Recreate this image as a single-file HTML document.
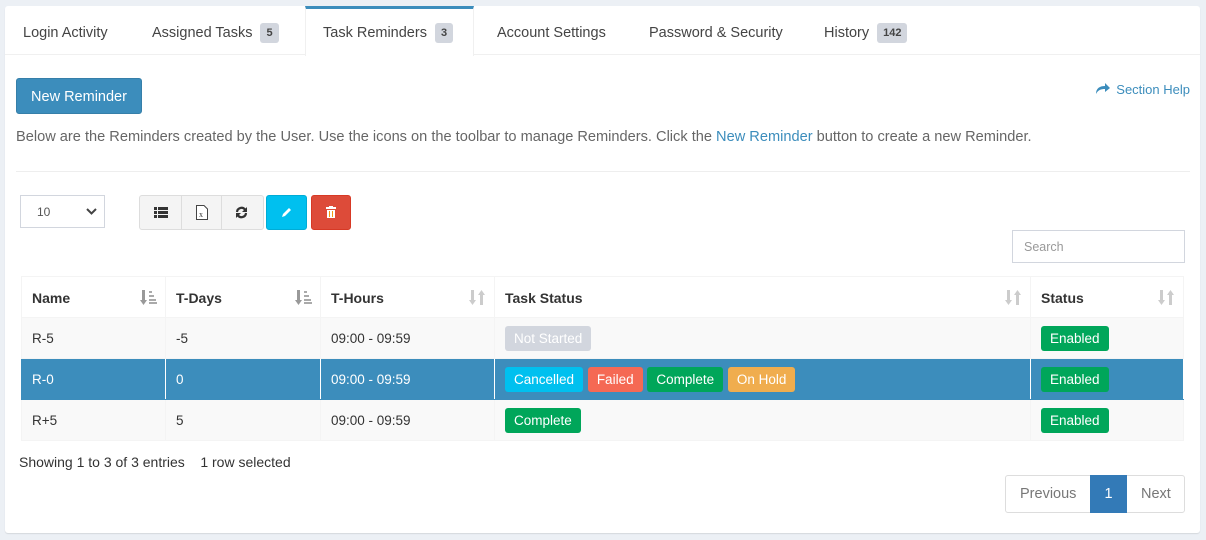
<!DOCTYPE html>
<html><head><style>
*{box-sizing:border-box;margin:0;padding:0}
body{width:1206px;height:540px;background:#ecf0f5;font-family:"Liberation Sans",sans-serif;color:#333;font-size:14px;position:relative;overflow:hidden}
.panel{position:absolute;left:5px;top:6px;width:1195px;height:527px;background:#fff;border-radius:3px;box-shadow:0 1px 1px rgba(0,0,0,.1)}
.abs{position:absolute}
.tabs{position:absolute;left:0;top:0;width:1195px;height:49px;border-bottom:1px solid #f0f0f0}
.tab{position:absolute;top:0;height:49px;line-height:54px;font-size:14.5px;color:#444;white-space:nowrap}
.tab.active{border-top:3px solid #3c8dbc;border-left:1px solid #f0f0f0;border-right:1px solid #f0f0f0;background:#fff;height:50px;line-height:49px}
.bdg{display:inline-block;background:#d2d6de;color:#444;font-size:11px;font-weight:bold;padding:3px 6px;border-radius:3px;line-height:14px;vertical-align:1px;margin-left:8px}
.btn{position:absolute;border-radius:3px;color:#fff;text-align:center}
table{position:absolute;left:16px;top:270px;width:1163px;border-collapse:collapse;font-size:13.5px}
td,th{border:1px solid #f4f4f4;height:41px;padding:1px 10px 0;text-align:left;position:relative}
th{font-weight:bold;color:#333;font-size:14px}
tr.g td{background:#f9f9f9}
tr.sel td{background:#3c8dbc;color:#fff;border-color:#3c8dbc;border-right-color:#fff}
.l{display:inline-block;color:#fff;font-size:13.5px;padding:0 9px;height:25px;line-height:25px;border-radius:3px;margin-right:1px}
.so{position:absolute;right:8px;top:13px}
</style></head><body>
<svg width="0" height="0" style="position:absolute"><defs>
<g id="az"><rect x="2" y="0" width="3" height="11" fill="#999"/><path d="M0 10H7L3.5 15Z" fill="#999"/><rect x="9" y="1" width="3" height="2" fill="#aaa"/><rect x="9" y="5" width="5" height="2" fill="#aaa"/><rect x="9" y="9" width="7" height="2" fill="#aaa"/><rect x="9" y="12" width="8" height="2" fill="#aaa"/></g>
<g id="ud"><rect x="2" y="0" width="3" height="11" fill="#ccc"/><path d="M0 10H7L3.5 15Z" fill="#ccc"/><rect x="11" y="4" width="3" height="11" fill="#ccc"/><path d="M9 5H16L12.5 0Z" fill="#ccc"/></g>
</defs></svg>
<div class="panel">
 <div class="tabs">
  <div class="tab" style="left:18px">Login Activity</div>
  <div class="tab" style="left:147px">Assigned Tasks<span class="bdg">5</span></div>
  <div class="tab active" style="left:300px;width:169px;padding-left:17px">Task Reminders<span class="bdg">3</span></div>
  <div class="tab" style="left:492px">Account Settings</div>
  <div class="tab" style="left:644px">Password &amp; Security</div>
  <div class="tab" style="left:819px">History<span class="bdg">142</span></div>
 </div>
 <div class="btn" style="left:11px;top:72px;width:126px;height:36px;line-height:36px;background:#3c8dbc;border:1px solid #367fa9;font-size:14.5px">New Reminder</div>
 <div class="abs" style="right:10px;top:76px;color:#3c8dbc;font-size:13px"><svg width="15" height="13" viewBox="0 0 15 13" style="vertical-align:-1px;margin-right:6px"><path d="M1 12 C1 6 5 4 10 4 V1 L15 6 L10 10 V7 C6 7 3 8 1 12Z" fill="#3c8dbc"/></svg>Section Help</div>
 <div class="abs" style="left:11px;top:123px;color:#666;font-size:14.6px;white-space:nowrap">Below are the Reminders created by the User. Use the icons on the toolbar to manage Reminders. Click the <span style="color:#3c8dbc">New Reminder</span> button to create a new Reminder.</div>
 <div class="abs" style="left:11px;top:165px;width:1174px;height:1px;background:#eee"></div>
 <div class="abs" style="left:15px;top:189px;width:85px;height:33px;border:1px solid #d2d6de;font-size:12px;line-height:33px;padding-left:16px;color:#555">10<svg class="abs" style="right:7px;top:12px" width="11" height="7"><path d="M1 1 L5.5 5.5 L10 1" stroke="#444" stroke-width="2" fill="none"/></svg></div>
 <div class="abs" style="left:134px;top:189px;width:125px;height:35px;border:1px solid #ddd;border-radius:3px;background:#f4f4f4">
  <div class="abs" style="left:41px;top:0;width:1px;height:33px;background:#ddd"></div>
  <div class="abs" style="left:81px;top:0;width:1px;height:33px;background:#ddd"></div>
  <svg class="abs" style="left:14px;top:11px" width="14" height="11"><rect x="0" y="0" width="3" height="3" fill="#333"/><rect x="4" y="0" width="10" height="3" fill="#333"/><rect x="0" y="4" width="3" height="3" fill="#333"/><rect x="4" y="4" width="10" height="3" fill="#333"/><rect x="0" y="8" width="3" height="3" fill="#333"/><rect x="4" y="8" width="10" height="3" fill="#333"/></svg>
  <svg class="abs" style="left:56px;top:9px" width="12" height="15"><path d="M.5 .5H8L11.5 4V14.5H.5Z" fill="#fff" stroke="#444"/><text x="3" y="12" font-size="8" font-family="Liberation Serif" fill="#333">x</text></svg>
  <svg class="abs" style="left:95px;top:10px" width="13" height="13" viewBox="0 0 13 13"><path d="M2 6 A4.5 4.5 0 0 1 10 3.5" stroke="#333" stroke-width="2.2" fill="none"/><path d="M11 7 A4.5 4.5 0 0 1 3 9.5" stroke="#333" stroke-width="2.2" fill="none"/><path d="M12 1 V6 H7Z" fill="#333"/><path d="M1 12 V7 H6Z" fill="#333"/></svg>
 </div>
 <div class="btn" style="left:261px;top:189px;width:41px;height:35px;background:#00c0ef;border:1px solid #00acd6"><svg style="margin-top:10px" width="12" height="12"><path d="M1 11 L2 8 L8 2 L10 4 L4 10Z" fill="#fff"/></svg></div>
 <div class="btn" style="left:306px;top:189px;width:40px;height:35px;background:#dd4b39;border:1px solid #d73925"><svg style="margin-top:10px" width="10" height="12"><rect x="0" y="1" width="10" height="2" fill="#fff"/><rect x="3" y="0" width="4" height="2" fill="#fff"/><path d="M1 4H9V12H1Z" fill="#fff"/><rect x="3" y="5" width="1" height="6" fill="#f39c12"/><rect x="6" y="5" width="1" height="6" fill="#f39c12"/></svg></div>
 <div class="abs" style="left:1007px;top:224px;width:173px;height:33px;border:1px solid #d2d6de;font-size:12.5px;color:#999;line-height:33px;padding-left:11px">Search</div>
 <table>
  <tr><th style="width:144px">Name<svg class="so" width="17" height="15"><use href="#az"/></svg></th><th style="width:155px">T-Days<svg class="so" width="17" height="15"><use href="#az"/></svg></th><th style="width:174px">T-Hours<svg class="so" width="17" height="15"><use href="#ud"/></svg></th><th style="width:536px">Task Status<svg class="so" width="17" height="15"><use href="#ud"/></svg></th><th>Status<svg class="so" width="17" height="15"><use href="#ud"/></svg></th></tr>
  <tr class="g"><td>R-5</td><td>-5</td><td>09:00 - 09:59</td><td><span class="l" style="background:#d2d6de">Not Started</span></td><td><span class="l" style="background:#00a65a">Enabled</span></td></tr>
  <tr class="sel"><td>R-0</td><td>0</td><td>09:00 - 09:59</td><td><span class="l" style="background:#00c0ef">Cancelled</span> <span class="l" style="background:#f56954">Failed</span> <span class="l" style="background:#00a65a">Complete</span> <span class="l" style="background:#f0ad4e">On Hold</span></td><td><span class="l" style="background:#00a65a">Enabled</span></td></tr>
  <tr class="g"><td>R+5</td><td>5</td><td>09:00 - 09:59</td><td><span class="l" style="background:#00a65a">Complete</span></td><td><span class="l" style="background:#00a65a">Enabled</span></td></tr>
 </table>
 <div class="abs" style="left:14px;top:448px;font-size:14px;color:#333">Showing 1 to 3 of 3 entries &nbsp;&nbsp; 1 row selected</div>
 <div class="abs" style="left:1000px;top:469px;width:180px;height:38px;border:1px solid #ddd;border-radius:3px;font-size:14.5px;line-height:36px;color:#777">
  <span class="abs" style="left:14px">Previous</span>
  <span class="abs" style="left:84px;top:-1px;width:37px;height:38px;line-height:38px;background:#337ab7;color:#fff;text-align:center">1</span>
  <span class="abs" style="left:135px">Next</span>
 </div>
</div>
</body></html>
